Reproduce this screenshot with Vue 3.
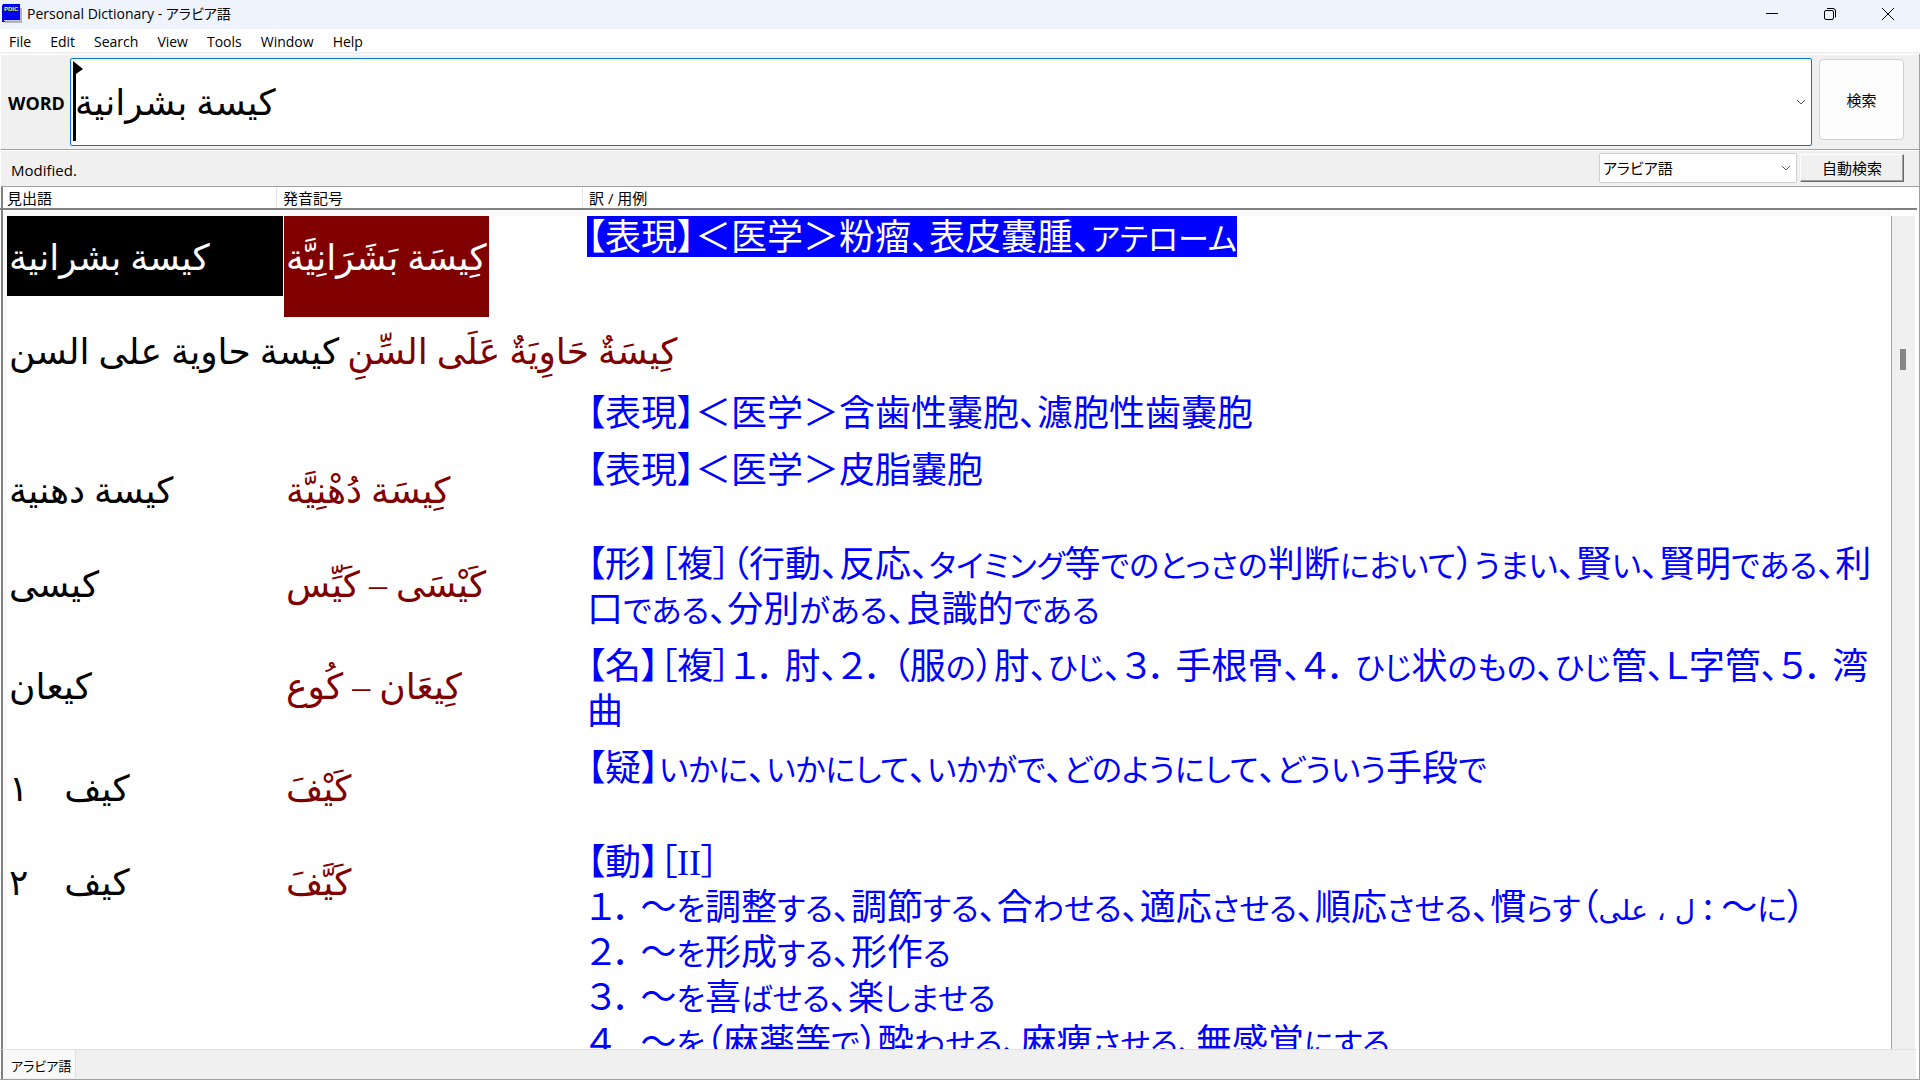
<script setup>
import { ref } from 'vue'

const menus = ['File', 'Edit', 'Search', 'View', 'Tools', 'Window', 'Help']
const query = ref('كيسة بشرانية')
const dictionary = ref('アラビア語')

const entries = [
  { head: 'كيسة بشرانية', pron: 'كِيسَة بَشَرَانِيَّة', lines: ['【表現】＜医学＞粉瘤、表皮嚢腫、アテローム'], selected: true },
  { head: 'كيسة حاوية على السن', pron: 'كِيسَةٌ حَاوِيَةٌ عَلَى السِّنِ', lines: ['【表現】＜医学＞含歯性嚢胞、濾胞性歯嚢胞'], wide: true },
  { head: 'كيسة دهنية', pron: 'كِيسَة دُهْنِيَّة', lines: ['【表現】＜医学＞皮脂嚢胞'] },
  { head: 'كيسى', pron: 'كَيْسَى – كَيِّس', lines: ['【形】［複］（行動、反応、タイミング等でのとっさの判断において）うまい、賢い、賢明である、利', '口である、分別がある、良識的である'] },
  { head: 'كيعان', pron: 'كِيعَان – كُوع', lines: ['【名】［複］１． 肘、２． （服の）肘、ひじ、３． 手根骨、４． ひじ状のもの、ひじ管、Ｌ字管、５． 湾', '曲'] },
  { head: 'كيف\u00a0\u00a0\u00a0\u00a0١', pron: 'كَيْفَ', lines: ['【疑】いかに、いかにして、いかがで、どのようにして、どういう手段で'] },
  { head: 'كيف\u00a0\u00a0\u00a0\u00a0٢', pron: 'كَيَّفَ', lines: ['【動】［II］', '１． ～を調整する、調節する、合わせる、適応させる、順応させる、慣らす（ل ، على : ～に）', '２． ～を形成する、形作る', '３． ～を喜ばせる、楽しませる', '４． ～を（麻薬等で）酔わせる、麻痺させる、無感覚にする'] },
]

// Splits a definition into runs so that each script gets its own text style.
function runs(line) {
  return line
    .split(/([ぁ-んァ-ヶー]+|II|[\u0600-\u06ff][\u0600-\u06ff ]*[\u0600-\u06ff])/)
    .filter(Boolean)
    .map((text) => ({ text, script: scriptOf(text[0]) }))
}

function scriptOf(char) {
  if (/[ぁ-んァ-ヶー]/.test(char)) return 'kana'
  if (/[\u0600-\u06ff]/.test(char)) return 'arabic'
  return char === 'I' ? 'roman' : 'kanji'
}
</script>

<template>
  <div class="window">
    <header class="titlebar">
      <svg class="app-icon" width="20" height="20" viewBox="0 0 20 20" aria-hidden="true">
        <path d="M3 19h17V4h-2v13H3z" fill="#b4b4b4" />
        <path d="M1 0h17v16H3v2H0V2z" fill="#0000f0" />
        <path d="M2 16h16v1H2z" fill="#c8c8ff" />
        <text x="2" y="7">PDIC</text>
      </svg>
      <h1>Personal Dictionary - アラビア語</h1>
      <div class="window-buttons">
        <button aria-label="Minimize"><svg width="14" height="14" viewBox="0 0 14 14"><path d="M1 6.500h12" /></svg></button>
        <button aria-label="Restore"><svg width="14" height="14" viewBox="0 0 14 14"><rect x="1.500" y="3.500" width="9" height="9" rx="1.500" /><path d="M4 1.500h6q2.500 0 2.500 2.500v6.500" /></svg></button>
        <button aria-label="Close"><svg width="14" height="14" viewBox="0 0 14 14"><path d="M1 1l12 12M13 1L1 13" /></svg></button>
      </div>
    </header>
    <nav class="menubar">
      <button v-for="m in menus" :key="m">{{ m }}</button>
    </nav>
    <div class="client">
      <form class="search" @submit.prevent>
        <label for="word">WORD</label>
        <div class="combo">
          <input id="word" v-model="query" dir="ltr" autocomplete="off" />
          <svg class="caret" width="10" height="80" viewBox="0 0 10 80" aria-hidden="true"><path d="M0 0L10 8L3 13V80H0z" /></svg>
          <svg class="chevron" width="10" height="6" viewBox="0 0 10 6" aria-hidden="true"><path d="M1 1l4 4l4-4" /></svg>
        </div>
        <button class="go">検索</button>
      </form>
      <div class="status">
        <span class="message">Modified.</span>
        <div class="select">
          <select v-model="dictionary" aria-label="辞書"><option>アラビア語</option></select>
          <svg class="chevron" width="10" height="6" viewBox="0 0 10 6" aria-hidden="true"><path d="M1 1l4 4l4-4" /></svg>
        </div>
        <button class="auto">自動検索</button>
      </div>
      <table class="list">
        <thead>
          <tr>
            <th class="head">見出語</th>
            <th class="pron">発音記号</th>
            <th class="def">訳 / 用例</th>
          </tr>
        </thead>
        <tbody>
          <tr v-for="e in entries" :key="e.head" :class="{ selected: e.selected, wide: e.wide }">
            <td class="head"><span>{{ e.head }}</span></td>
            <td class="pron"><span>{{ e.pron }}</span></td>
            <td class="def">
              <p v-for="l in e.lines" :key="l"><span class="line"><span v-for="(r, i) in runs(l)" :key="i" :class="r.script">{{ r.text }}</span></span></p>
            </td>
          </tr>
        </tbody>
      </table>
      <div class="scrollbar" aria-hidden="true"><div class="thumb"></div></div>
      <footer class="tabs"><button>アラビア語</button></footer>
    </div>
  </div>
</template>

<style>
body {
  margin: 0;
}
</style>

<style scoped>
* {
  box-sizing: border-box;
}
.window {
  position: relative;
  display: flex;
  flex-direction: column;
  height: 100vh;
  overflow: hidden;
  background: #fff;
  color: #000;
  font: 15px/20px "Open Sans", "Noto Sans CJK JP", sans-serif;
  font-feature-settings: "palt";
}
button,
input,
select {
  font: inherit;
  font-feature-settings: inherit;
  color: inherit;
  margin: 0;
  padding: 0;
  border: 0;
  background: none;
}
svg {
  fill: none;
  stroke: #000;
}
.titlebar {
  display: flex;
  align-items: center;
  height: 29px;
  padding-bottom: 1px;
  background: #eff3fb;
  flex: none;
}
.app-icon {
  stroke: none;
  margin: 0 5px 0 2px;
}
.app-icon text {
  fill: #ff3;
  font: 700 6px "Liberation Sans", sans-serif;
}
h1 {
  flex: 1;
  margin: 0;
  font-size: 14px;
  font-weight: 400;
}
.window-buttons {
  display: flex;
  padding-right: 3px;
}
.window-buttons button {
  width: 58px;
  height: 28px;
  display: grid;
  place-items: center;
}
.menubar {
  display: flex;
  gap: 19px;
  height: 25px;
  padding: 3px 9px 2px;
  border-bottom: 2px solid #f0f0f0;
  font-size: 14px;
  flex: none;
}
.client {
  flex: 1;
  min-height: 0;
  display: grid;
  grid-template-rows: 96px 37px minmax(0, 1fr) 30px;
  grid-template-columns: minmax(0, 1fr) 28px;
  border-right: 1px solid #a0a0a0;
  border-bottom: 1px solid #a0a0a0;
}
.search,
.status {
  grid-column: 1 / 3;
  display: flex;
  background: #f0f0f0;
  border-top: 1px solid #fff;
  border-bottom: 1px solid #a0a0a0;
  margin-left: 1px;
}
.search {
  padding: 3px 15px 2px 7px;
}
.search label {
  width: 62px;
  align-self: center;
  font-size: 18px;
  font-weight: 700;
}
.combo {
  position: relative;
  flex: 1;
  height: 88px;
  border: 1px solid #0078d4;
  background: #fff;
  border-radius: 2px;
}
.combo input {
  width: 100%;
  height: 100%;
  padding: 2px 4px 0;
  outline: 0;
  font: 36px/80px "Liberation Serif", "DejaVu Sans", serif;
}
.caret {
  position: absolute;
  left: 2px;
  top: 2px;
  fill: #000;
  stroke: none;
}
.chevron {
  position: absolute;
  right: 5px;
  top: calc(50% - 3px);
  stroke: #555;
  pointer-events: none;
}
.go {
  width: 85px;
  height: 81px;
  margin: 1px 0 0 7px;
  border: 1px solid #d0d0d0;
  border-radius: 4px;
  background: #fdfdfd;
}
.status {
  padding: 2px 15px 2px 10px;
}
.message {
  flex: 1;
  line-height: 34px;
}
.select {
  position: relative;
  width: 198px;
  height: 30px;
  border: 1px solid #d0d0d0;
  border-radius: 2px;
  background: #fff;
}
.select select {
  appearance: none;
  width: 100%;
  height: 100%;
  padding: 0 3px;
}
.auto {
  width: 104px;
  height: 28px;
  margin: 1px 0 0 3px;
  border: 1px solid;
  border-color: #fff #696969 #696969 #fff;
  box-shadow: inset -1px -1px #a0a0a0;
}
.list {
  grid-column: 1;
  grid-row: 3;
  display: flex;
  flex-direction: column;
  min-height: 0;
  border-left: 2px solid #808080;
  margin-left: 1px;
}
.list thead {
  display: block;
  height: 23px;
  border-bottom: 2px solid #808080;
  margin: 0 -26px 0 -3px;
  flex: none;
}
.list tr {
  display: flex;
}
.list th {
  padding: 0 0 0 6px;
  text-align: left;
  font-weight: 400;
  height: 21px;
  line-height: 22px;
  border-right: 1px solid #e5e5e5;
}
.list th.head {
  width: 277px;
  padding-left: 7px;
}
th.pron {
  width: 306px;
}
.list th.def {
  border: 0;
}
.list tbody {
  display: block;
  flex: 1;
  min-height: 0;
  overflow: hidden;
  border-top: 6px solid #f9f9f9;
  border-left: 4px solid #f9f9f9;
}
.list tbody tr {
  padding-bottom: 12px;
}
.list td {
  padding: 0;
  white-space: nowrap;
}
td.head,
td.pron {
  height: 82px;
  font: 36px/84px "Liberation Serif", "DejaVu Sans", serif;
}
td.head {
  width: 277px;
  flex: none;
}
td.pron {
  width: 303px;
  flex: none;
  color: #800000;
}
td.head span,
td.pron span {
  display: inline-block;
  vertical-align: top;
  padding: 0 2px;
}
td.def {
  color: #0000ff;
  font-family: "Noto Sans CJK JP", sans-serif;
  font-size: 36px;
}
td.def p {
  height: 45px;
  margin: 0;
  line-height: 37px;
}
.kana {
  font-size: 31px;
  line-height: 1;
}
.arabic {
  font: 28px/1 "DejaVu Sans", sans-serif;
}
.roman {
  font: 36px/1 "Liberation Serif", serif;
}
.selected span {
  color: #fff;
}
.selected td.head span {
  width: 276px;
  height: 80px;
  background: #000;
}
.selected td.pron span {
  height: 101px;
  background: #800000;
}
.selected .line {
  display: inline-block;
  height: 41px;
  background: #0000ff;
}
.list tbody .wide {
  flex-wrap: wrap;
}
.wide td.head,
.wide td.pron {
  width: auto;
}
.wide td.head {
  padding-right: 4px;
}
.wide td.def {
  width: 100%;
  padding-left: 580px;
}
.scrollbar {
  grid-column: 2;
  grid-row: 3;
  margin: 29px 4px 0 0;
  border-left: 1px solid #a0a0a0;
  background: #f0f0f0;
}
.thumb {
  width: 6px;
  height: 21px;
  margin: 133px 0 0 8px;
  background: #868686;
}
.tabs {
  grid-column: 1 / 3;
  border-top: 1px solid #e0e0e0;
  background: #f0f0f0;
  margin: 0 3px 0 1px;
  border-left: 2px solid #808080;
}
.tabs button {
  display: block;
  width: 73px;
  height: 28px;
  padding-left: 8px;
  font-size: 13px;
  line-height: 32px;
  text-align: left;
  background: #f9f9f9;
  border-right: 1px solid #e0e0e0;
}
</style>
